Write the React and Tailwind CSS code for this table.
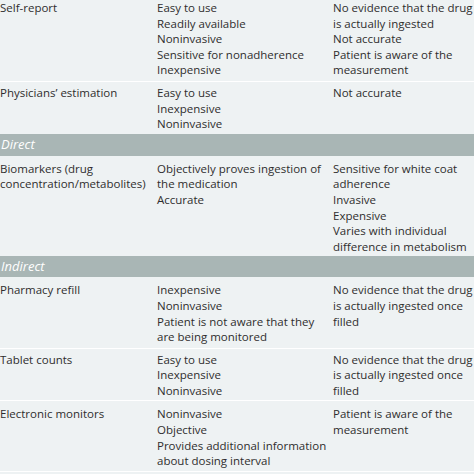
import React from "react";

const rows = [
  {
    type: "row",
    pad: "pt-0 pb-[3px]",
    sep: true,
    cells: [["Self-report"], ["Easy to use", "Readily available", "Noninvasive", "Sensitive for nonadherence", "Inexpensive"], ["No evidence that the drug", "is actually ingested", "Not accurate", "Patient is aware of the", "measurement"]],
  },
  {
    type: "row",
    pad: "pt-[3px] pb-[2px]",
    cells: [["Physicians’ estimation"], ["Easy to use", "Inexpensive", "Noninvasive"], ["Not accurate"]],
  },
  { type: "head", label: "Direct", h: "h-[22px]" },
  {
    type: "row",
    pad: "pt-[5px] pb-[2px]",
    cells: [["Biomarkers (drug", "concentration/metabolites)"], ["Objectively proves ingestion of", "the medication", "Accurate"], ["Sensitive for white coat", "adherence", "Invasive", "Expensive", "Varies with individual", "difference in metabolism"]],
  },
  { type: "head", label: "Indirect", h: "h-[21px]" },
  {
    type: "row",
    pad: "pt-[5px] pb-[3px]",
    sep: true,
    cells: [["Pharmacy refill"], ["Inexpensive", "Noninvasive", "Patient is not aware that they", "are being monitored"], ["No evidence that the drug", "is actually ingested once", "filled"]],
  },
  {
    type: "row",
    pad: "pt-[3px] pb-[2px]",
    sep: true,
    cells: [["Tablet counts"], ["Easy to use", "Inexpensive", "Noninvasive"], ["No evidence that the drug", "is actually ingested once", "filled"]],
  },
  {
    type: "row",
    pad: "pt-[5px] pb-[2px]",
    sep: true,
    cells: [["Electronic monitors"], ["Noninvasive", "Objective", "Provides additional information", "about dosing interval"], ["Patient is aware of the", "measurement"]],
  },
];

function Cell({ lines }) {
  return (
    <div className="whitespace-nowrap">
      {lines.map((l, i) => (
        <div key={i}>{l}</div>
      ))}
    </div>
  );
}

export default function App() {
  return (
    <div
      className="w-[474px] h-[474px] overflow-hidden bg-[#eef2f3] text-[#2e2e2e] text-[11.5px] leading-[15.6px]"
      style={{ fontFamily: '"Open Sans", "Noto Sans", sans-serif' }}
    >
      {rows.map((r, i) =>
        r.type === "head" ? (
          <div key={i} className={`${r.h} bg-[#a9b6b5] flex items-center pl-[1px] text-white italic text-[13px]`}>
            {r.label}
          </div>
        ) : (
          <div
            key={i}
            className={`grid grid-cols-[157px_176px_1fr] ${r.pad} ${r.sep ? "border-b border-white" : ""}`}
          >
            {r.cells.map((c, j) => (
              <Cell key={j} lines={c} />
            ))}
          </div>
        )
      )}
    </div>
  );
}
